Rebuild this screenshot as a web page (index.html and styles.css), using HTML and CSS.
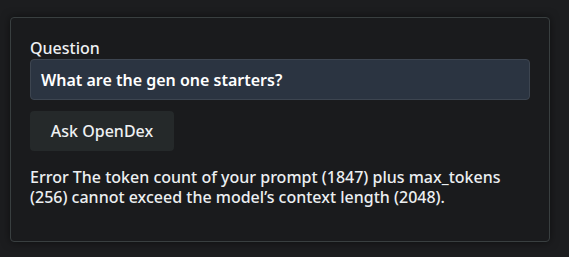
FILE: index.html
```html
<!DOCTYPE html>
<html>
<head>
<meta charset="utf-8">
<link rel="stylesheet" href="styles.css">
</head>
<body>
<div class="card">
  <label class="label">Question</label>
  <div class="input">What are the gen one starters?</div>
  <button class="btn">Ask OpenDex</button>
  <p class="error">Error The token count of your prompt (1847) plus max_tokens (256) cannot exceed the model’s context length (2048).</p>
</div>
</body>
</html>
```
FILE: styles.css
```css
html, body { margin: 0; padding: 0; }
body {
  background: #1c1d1f;
  font-family: "Noto Sans", sans-serif;
  color: #eceff1;
  width: 569px;
  height: 257px;
  padding: 17px 19px 15px 10px;
  box-sizing: border-box;
}
.card {
  box-sizing: border-box;
  width: 540px;
  height: 225px;
  border: 1px solid #393f40;
  border-radius: 4px;
  background: #1a1b1d;
  box-shadow: 0 0 8px rgba(0,0,0,0.5);
  padding: 19px 19px;
  display: flex;
  flex-direction: column;
  align-items: flex-start;
}
.label {
  font-size: 16px;
  font-weight: 500;
  line-height: 22px;
  color: #eef0f2;
}
.input {
  box-sizing: border-box;
  width: 500px;
  height: 41px;
  background: #2b3441;
  border: 1px solid #3d4550;
  border-radius: 4px;
  padding: 0 10px;
  display: flex;
  align-items: center;
  font-size: 16px;
  font-weight: 600;
  color: #ffffff;
}
.btn {
  margin-top: 11px;
  width: 144px;
  height: 40px;
  border: none;
  border-radius: 4px;
  background: #25292a;
  color: #eef0f2;
  font-family: inherit;
  font-size: 16px;
  font-weight: 500;
}
.error {
  margin: 16px 0 0;
  font-size: 16px;
  font-weight: 500;
  line-height: 20px;
  color: #eceff1;
  width: 482px;
}
```
